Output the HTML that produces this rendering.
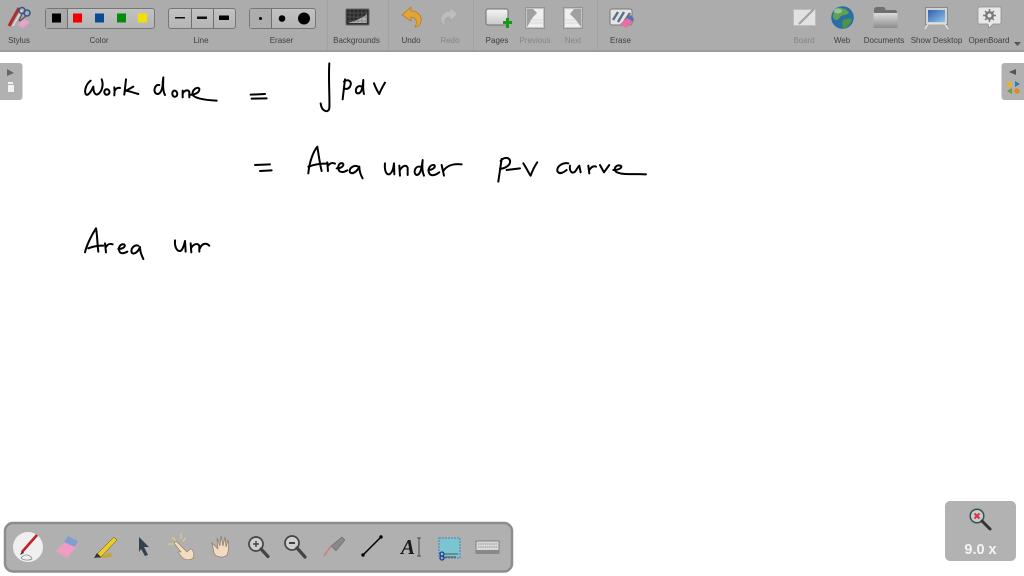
<!DOCTYPE html>
<html lang="en"><head><meta charset="utf-8"><title>OpenBoard</title>
<style>
html,body{margin:0;padding:0;background:#fff;width:1024px;height:576px;overflow:hidden}
svg{display:block;filter:blur(.35px)}
text{font-family:"Liberation Sans",sans-serif}
.l{font-size:8px;fill:#3e3e3e;text-anchor:middle}
.d{font-size:8px;fill:#858585;text-anchor:middle}
.ink path{fill:none;stroke:#000;stroke-width:6;stroke-linecap:round;stroke-linejoin:round}
</style></head><body>
<svg width="1024" height="576" viewBox="0 0 1024 576" xmlns="http://www.w3.org/2000/svg">
<defs>
<linearGradient id="btn" x1="0" y1="0" x2="0" y2="1"><stop offset="0" stop-color="#c2c2c2"/><stop offset="1" stop-color="#b4b4b4"/></linearGradient>
<linearGradient id="scr" x1="0" y1="0" x2="1" y2="1"><stop offset="0" stop-color="#2f63ad"/><stop offset="1" stop-color="#8fc0ea"/></linearGradient>
<linearGradient id="pg" x1="0" y1="0" x2="0" y2="1"><stop offset="0" stop-color="#f4f4f4"/><stop offset="1" stop-color="#c9c9c9"/></linearGradient>
<linearGradient id="fold" x1="0" y1="0" x2="0" y2="1"><stop offset="0" stop-color="#dcdcdc"/><stop offset="1" stop-color="#8c8c8c"/></linearGradient>
</defs>
<rect width="1024" height="576" fill="#fff"/>

<!-- top bar -->
<rect width="1024" height="51" fill="#acacac"/>
<rect y="50" width="1024" height="2" fill="#9d9d9d"/>
<g fill="#a2a2a2"><rect x="327" y="0" width="1" height="50"/><rect x="388" y="0" width="1" height="50"/><rect x="473" y="0" width="1" height="50"/><rect x="597" y="0" width="1" height="50"/></g>

<!-- stylus icon -->
<path d="M9 26 L19 8" stroke="#b03030" stroke-width="3.200"/>
<path d="M13 26 L22 10" stroke="#dcdcdc" stroke-width="1.500"/>
<circle cx="22" cy="10.500" r="3" fill="none" stroke="#34558c" stroke-width="1.500"/><circle cx="27" cy="13" r="3" fill="none" stroke="#34558c" stroke-width="1.500"/>
<path d="M22 14 L19 21 M26 16 L20 21" stroke="#555" stroke-width="1.200"/>
<path d="M17 25 L24 19 L30 22 L23 28 Z" fill="#e8a3c6"/>
<text class="l" x="19" y="43">Stylus</text>

<!-- color -->
<rect x="45.500" y="8.500" width="109" height="20" rx="2.500" fill="url(#btn)" stroke="#767676"/>
<rect x="46" y="9" width="21" height="19" fill="#a9a9a9"/><rect x="67" y="9" width="1" height="19" fill="#6e6e6e"/>
<rect x="52" y="13.500" width="9" height="9" fill="#000"/><rect x="73" y="13.500" width="9" height="9" fill="#f00000"/><rect x="95" y="13.500" width="9" height="9" fill="#0a4a94"/><rect x="117" y="13.500" width="9" height="9" fill="#068a0a"/><rect x="138" y="13.500" width="9" height="9" fill="#f4e000"/>
<text class="l" x="99" y="43">Color</text>

<!-- line -->
<rect x="168.500" y="8.500" width="67" height="20" rx="2.500" fill="url(#btn)" stroke="#767676"/>
<rect x="191" y="9" width="1" height="19" fill="#6e6e6e"/><rect x="213" y="9" width="1" height="19" fill="#6e6e6e"/>
<rect x="175" y="17" width="10" height="1.500" fill="#111"/><rect x="197" y="16.500" width="10" height="2.500" fill="#111"/><rect x="219" y="15.500" width="10" height="4.500" fill="#000"/>
<text class="l" x="201" y="43">Line</text>

<!-- eraser -->
<rect x="249.500" y="8.500" width="66" height="20" rx="2.500" fill="url(#btn)" stroke="#767676"/>
<rect x="250" y="9" width="21" height="19" fill="#adadad"/><rect x="271" y="9" width="1" height="19" fill="#6e6e6e"/>
<circle cx="260.500" cy="18.500" r="1.500" fill="#000"/><circle cx="282" cy="18.500" r="3.300" fill="#000"/><circle cx="304" cy="18.500" r="6" fill="#000"/>
<text class="l" x="281.500" y="43">Eraser</text>

<!-- backgrounds -->
<rect x="346" y="9" width="23" height="16" rx="1" fill="#2b2b2b" stroke="#666"/>
<path d="M348 23 C355 21 362 18 367 14 L367 23 Z" fill="#b4b4b4"/>
<path d="M350 10 V24 M354 10 V24 M358 10 V24 M362 10 V24 M366 10 V24 M347 13 H368 M347 17 H368 M347 21 H368" stroke="#666" stroke-width=".5"/>
<text class="l" x="356.500" y="43">Backgrounds</text>

<!-- undo / redo -->
<path d="M402 15 L411 7 L411 11 C420 11 423 19 420 24 C419 26 417 27 415 27 C418 22 416 17 411 17 L411 21 Z" fill="#e3a53a" stroke="#b67c1e" stroke-width=".8"/>
<text class="l" x="411" y="43">Undo</text>
<path d="M458 14 L450 7 L450 11 C444 11 440 15 441 21 C442 24 444 26 446 26 C443 22 445 17 450 17 L450 21 Z" fill="#bdbdbd" stroke="#a4a4a4" stroke-width=".8"/>
<text class="d" x="450" y="43">Redo</text>

<!-- pages -->
<rect x="486" y="9" width="22" height="16" rx="2" fill="url(#pg)" stroke="#6f6f6f"/>
<path d="M503 21 h3 v-3 h3 v3 h3 v3 h-3 v4 h-3 v-4 h-3 Z" fill="#169a16"/>
<text class="l" x="497" y="43">Pages</text>
<rect x="525.500" y="7.500" width="19" height="21" fill="#c4c4c4" stroke="#959595"/>
<path d="M533 9 H543 V27 H527 L533 17 L537 13 Z" fill="#efefef"/><path d="M527 9 H533 L537 13 L533 17 L527 27 Z" fill="#a0a0a0"/>
<path d="M530 20 H543 M529 23 H543" stroke="#cfcfcf" stroke-width=".8"/>
<text class="d" x="535" y="43">Previous</text>
<rect x="563.500" y="7.500" width="19" height="21" fill="#c4c4c4" stroke="#959595"/>
<path d="M565 9 H574 L570 14 L576 20 L581 27 H565 Z" fill="#efefef"/><path d="M574 9 H581 V27 L576 20 L570 14 Z" fill="#a0a0a0"/>
<path d="M565 20 H576 M565 23 H578" stroke="#cfcfcf" stroke-width=".8"/>
<text class="d" x="573" y="43">Next</text>

<!-- erase -->
<rect x="610" y="9" width="22" height="16" rx="2" fill="#e4e4e4" stroke="#777"/>
<path d="M613 20 L618 12 M618 22 L624 12 M624 22 L630 13" stroke="#5c6f86" stroke-width="2.400"/>
<path d="M620 24 L627 18 L633 22 L626 28 Z" fill="#e86fa6"/><path d="M627 18 L631 15 L634 19 L633 22 Z" fill="#5c70b0"/>
<text class="l" x="620.500" y="43">Erase</text>

<!-- board -->
<rect x="793.500" y="9.500" width="22" height="16" fill="#e2e2e2" stroke="#bdbdbd"/>
<path d="M799 24 L814 9" stroke="#a2a2a2" stroke-width="2.200"/>
<text class="d" x="804" y="43">Board</text>

<!-- web -->
<circle cx="842.500" cy="17.500" r="11.300" fill="#2a6ea8"/>
<path d="M836 8 C843 7 848 10 849 13 C845 16 843 14 840 17 C838 21 835 21 833 17 C833 13 834 10 836 8 Z" fill="#5fa44c"/>
<path d="M843 20 C847 18 851 18 852 20 C850 25 846 28 843 28 C842 25 842 22 843 20 Z" fill="#4f9444"/>
<ellipse cx="838" cy="11" rx="4" ry="2.500" fill="#bcd7ea" opacity=".6"/>
<text class="l" x="842" y="43">Web</text>

<!-- documents -->
<path d="M874 10 C874 8 875 7 877 7 H884 L886 10 H895 C896 10 897 11 897 12 V28 H874 Z" fill="#6f6f6f"/>
<path d="M873.500 13 H897.500 V28 H873.500 Z" fill="url(#fold)"/>
<text class="l" x="884" y="43">Documents</text>

<!-- show desktop -->
<rect x="925.500" y="7.500" width="22" height="17" fill="#d4d4d4" stroke="#888"/>
<rect x="928" y="10" width="17" height="12" fill="url(#scr)"/>
<path d="M925 29 L928 24 H945 L948 29" fill="none" stroke="#e6e6e6" stroke-width="1.300"/>
<text class="l" x="936.500" y="43">Show Desktop</text>

<!-- openboard -->
<path d="M979 7 H1000 C1001 7 1001 8 1001 9 V22 C1001 23 1001 24 1000 24 H993 L989 28 L988 24 H979 C978 24 978 23 978 22 V9 C978 8 978 7 979 7 Z" fill="#e8e8e8" stroke="#8a8a8a" stroke-width=".7"/>
<circle cx="989.500" cy="15.500" r="4.500" fill="#7a7a7a"/>
<path d="M989.500 9 V22 M983 15.500 H996 M985 11 L994 20 M994 11 L985 20" stroke="#7a7a7a" stroke-width="1.500"/>
<circle cx="989.500" cy="15.500" r="2" fill="#e8e8e8"/>
<text class="l" x="989" y="43">OpenBoard</text>
<path d="M1014 42 H1021 L1017.500 46 Z" fill="#555"/>

<!-- side tabs -->
<rect x="-4" y="63" width="26.500" height="37" rx="3" fill="#b1b1b1"/>
<path d="M7 69 L14 73 L7 76 Z" fill="#666"/>
<rect x="8" y="82" width="5" height="2" fill="#f2f2f2"/><rect x="8" y="85" width="6" height="7" fill="#f2f2f2"/>
<rect x="1001.500" y="63" width="28" height="37" rx="3" fill="#b1b1b1"/>
<path d="M1016 69 L1009 72 L1016 75 Z" fill="#555"/>
<rect x="1007" y="82" width="5" height="5" rx="1" fill="#e2b52c"/><path d="M1015 81 L1020 84 L1015 87 Z" fill="#2a7fb0"/>
<path d="M1012 88 L1007 91 L1012 94 Z" fill="#7c9440"/><circle cx="1017" cy="91" r="2.700" fill="#e08a20"/>

<!-- bottom dock -->
<rect x="5" y="523" width="507" height="48.500" rx="8" fill="#b0b0b0" stroke="#8d8d8d" stroke-width="2.500"/>
<circle cx="28" cy="547" r="15" fill="#efefef"/>
<path d="M22 552 L37 535" stroke="#c0202a" stroke-width="2.600"/><path d="M20 555 L22 551 L24 553 Z" fill="#333"/>
<path d="M21 558 C26 552 31 556 32 559 C28 561 23 560 21 558" fill="none" stroke="#888" stroke-width=".8"/>
<path d="M56 551 L67 539 L78 545 L67 558 Z" fill="#ee9cc2"/><path d="M64 542 L68 536 L78 541 L75 547 Z" fill="#7f9fd0"/>
<path d="M96 555 L114 537 L117 540 L100 558 Z" fill="#eecd1e" stroke="#444" stroke-width=".5"/><path d="M94 558 L97 553 L101 557 Z" fill="#333"/>
<path d="M100 558 L110 552 L113 556 L105 558 Z" fill="#c9a43a"/>
<path d="M139 537 L149 547 L144 547 L148 555 L145 556 L141 549 L139 552 Z" fill="#33404f"/>
<path d="M172 537 L176 541 M181 533 L181 539 M168 544 L174 544 M186 538 L183 541" stroke="#e4d48a" stroke-width="1"/>
<path d="M176 541 L187 552 L190 549 C193 549 195 554 193 558 C190 561 184 560 181 556 L178 552 L181 552 L174 543 Z" fill="#f3dcc0" stroke="#8e7a60" stroke-width=".6"/>
<path d="M212 543 L214 553 C216 558 224 558 227 555 C229 550 229 545 228 540 L226 547 L225 537 L223 546 L221 536 L220 546 L217 538 L218 549 Z" fill="#f1dcc3" stroke="#8e7a60" stroke-width=".7"/>
<circle cx="256" cy="544" r="7" fill="#cfcfcf" stroke="#444" stroke-width="1.700"/><path d="M253 544 H259 M256 541 V547" stroke="#333" stroke-width="1.300"/><path d="M261 549 L268 556.500" stroke="#444" stroke-width="3.200" stroke-linecap="round"/>
<circle cx="292" cy="543" r="7" fill="#cfcfcf" stroke="#444" stroke-width="1.700"/><path d="M289 543 H295" stroke="#333" stroke-width="1.800"/><path d="M297 548 L305 557" stroke="#444" stroke-width="3.200" stroke-linecap="round"/>
<path d="M331 546 L342 537 L345 540 L336 551 Z" fill="#888" stroke="#555" stroke-width=".5"/><path d="M331 546 L324 556" stroke="#d07a70" stroke-width="1.500"/>
<path d="M363 555 L381 537" stroke="#000" stroke-width="1.500"/><circle cx="363" cy="555" r="1.700" fill="#000"/><circle cx="381" cy="537" r="1.700" fill="#000"/>
<text x="401" y="554" font-style="italic" font-weight="bold" font-size="21" fill="#1a1a1a" style="font-family:'Liberation Serif',serif">A</text>
<path d="M417 538 H421 M419 538 V556 M417 556 H421" stroke="#333" stroke-width=".8" fill="none"/>
<rect x="439" y="538" width="21" height="20" fill="#7cc4cf" stroke="#4a7fb5" stroke-dasharray="2 1"/>
<circle cx="442" cy="554" r="2" fill="none" stroke="#243f90" stroke-width="1.300"/><circle cx="442" cy="558" r="2" fill="none" stroke="#243f90" stroke-width="1.300"/><path d="M444 554 H458 M444 557 H456" stroke="#555" stroke-width="1"/>
<rect x="476" y="541" width="23" height="12" fill="#d8d8d8" stroke="#808080"/><rect x="476" y="550" width="23" height="4" fill="#888"/>
<path d="M478 544 H497 M478 547 H497" stroke="#999" stroke-width="1" stroke-dasharray="1.500 .7"/>

<!-- zoom indicator -->
<rect x="945" y="501" width="71" height="60" rx="5" fill="#b2b2b2"/>
<circle cx="977" cy="516" r="6.800" fill="#c4ced0" stroke="#3a5050" stroke-width="1.500"/>
<path d="M974.500 513.500 L979.500 518.500 M979.500 513.500 L974.500 518.500" stroke="#e0303c" stroke-width="2"/>
<path d="M982 521 L990 529" stroke="#333" stroke-width="3" stroke-linecap="round"/>
<text x="980.500" y="554" font-size="14.500" font-weight="bold" fill="#f4f4f4" text-anchor="middle">9.0 x</text>

<!-- handwritten ink -->
<title>Work done = ∫ P dV = Area under P-V curve. Area unr</title>
<g class="ink" transform="translate(70 70) scale(.3333)">
<path d="M62 32 C50 40 42 60 47 72 C52 80 62 68 70 50 C70 65 75 78 85 72 C95 65 102 45 95 28"/>
<path d="M108 58 C100 62 102 76 112 74 C122 72 120 56 108 58"/>
<path d="M133 52 C134 60 134 68 133 76 M134 62 C138 56 144 52 150 54"/>
<path d="M168 28 L163 74 M190 50 C180 56 170 62 165 62 C175 62 190 68 205 72"/>
<path d="M268 45 C252 42 248 70 262 72 C272 72 276 60 278 45 C278 30 280 25 280 22 C279 45 278 62 285 75"/>
<path d="M312 62 C304 66 306 82 316 80 C326 78 322 60 312 62"/>
<path d="M338 62 L338 82 M338 70 C345 60 355 58 358 66 L358 82"/>
<path d="M358 74 C372 76 390 68 388 56 C382 48 365 60 368 74 C372 84 400 90 440 92"/>
<path d="M542 74 L585 72 M545 86 L590 85"/>
<path d="M778 -20 C775 30 780 90 778 115 C775 130 755 125 752 100"/>
<path d="M825 28 L818 88 M822 35 C835 25 848 35 840 50 C835 58 825 58 822 54"/>
<path d="M875 50 C860 42 852 65 862 70 C872 72 878 60 880 30 C880 45 878 60 882 72"/>
<path d="M912 40 C918 55 925 68 928 72 C932 60 938 50 945 38"/>
</g>
<g class="ink" transform="translate(240 135) scale(.3333)">
<path d="M45 90 L90 88 M60 108 L95 106"/>
<path d="M205 115 C208 80 220 50 232 35 C236 60 240 90 245 108 M205 95 C225 88 240 85 258 86"/>
<path d="M262 82 L264 108 M264 92 C270 84 278 82 285 86"/>
<path d="M290 100 C305 100 315 90 308 85 C298 82 290 95 298 108 C305 114 315 110 322 106"/>
<path d="M355 95 C342 88 325 100 330 112 C338 120 352 108 358 95 C358 110 362 120 368 130"/>
<path d="M435 85 C433 105 438 120 448 118 C458 112 460 100 462 85 L463 118"/>
<path d="M478 92 L480 122 M480 105 C488 92 498 88 503 98 L503 120"/>
<path d="M540 95 C525 92 518 115 530 120 C540 120 545 105 548 75 C546 95 546 110 552 122"/>
<path d="M565 105 C578 105 590 95 582 90 C570 88 560 105 570 118 C578 124 590 118 598 112"/>
<path d="M605 90 L612 122 M610 108 C620 92 640 85 665 88"/>
<path d="M785 72 L775 140 M782 78 C795 60 818 70 808 88 C800 98 790 100 780 102"/>
<path d="M800 105 L840 100"/>
<path d="M850 85 C860 100 868 118 872 122 C878 105 885 92 892 82"/>
<path d="M985 85 C970 82 950 92 952 108 C958 120 972 112 980 105"/>
<path d="M990 92 C988 108 995 118 1005 110 C1012 102 1014 95 1018 92 L1022 112"/>
<path d="M1045 92 L1048 115 M1048 105 C1055 95 1062 92 1068 95"/>
<path d="M1080 90 L1092 112 L1108 90"/>
<path d="M1120 105 C1135 105 1150 98 1142 92 C1130 88 1118 100 1128 110 C1145 122 1190 115 1218 118"/>
</g>
<g class="ink" transform="translate(70 215) scale(.3333)">
<path d="M45 112 C50 90 65 60 78 40 C82 60 82 90 85 110 M55 100 C70 94 85 92 100 92"/>
<path d="M105 85 L108 112 M108 96 C112 88 120 85 128 88"/>
<path d="M145 102 C158 102 170 94 162 88 C150 86 142 100 150 112 C156 118 165 114 172 110"/>
<path d="M205 92 C192 88 180 102 186 114 C194 120 206 108 210 96 C210 110 214 120 220 132"/>
<path d="M315 76 C313 100 325 115 335 105 C340 98 343 88 345 78 L347 110"/>
<path d="M362 85 L364 112 M364 98 C372 86 382 84 388 92 L388 110"/>
<path d="M390 100 C395 86 408 82 418 92"/>
</g>
</svg>
</body></html>
